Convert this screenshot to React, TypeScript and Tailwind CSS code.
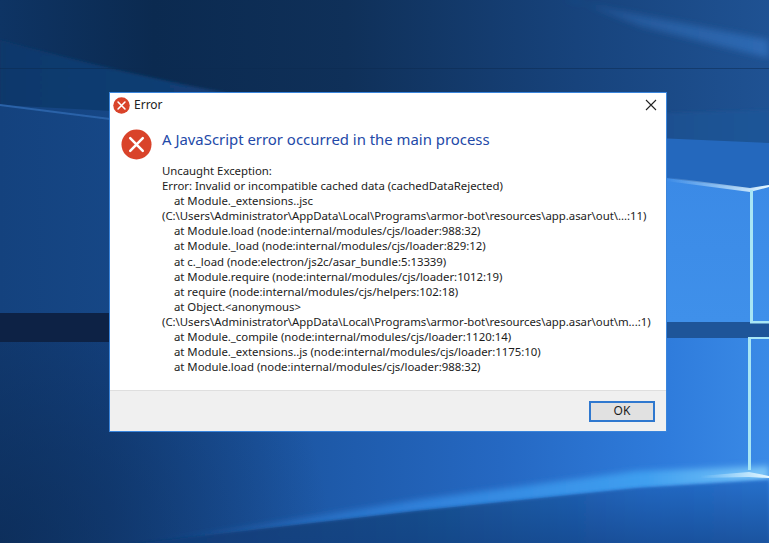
import React from "react";

function Wallpaper() {
  return (
    <svg className="absolute inset-0 w-full h-full" viewBox="0 0 769 543" preserveAspectRatio="none">
      <defs>
        <linearGradient id="base" x1="0" y1="0" x2="1" y2="0">
          <stop offset="0" stopColor="#0e3464" />
          <stop offset="0.2" stopColor="#0b2a50" />
          <stop offset="0.45" stopColor="#0f3059" />
          <stop offset="0.75" stopColor="#17437c" />
          <stop offset="1" stopColor="#1f5293" />
        </linearGradient>
        <linearGradient id="upper" x1="0" y1="0" x2="1" y2="0">
          <stop offset="0" stopColor="#0f386b" />
          <stop offset="0.3" stopColor="#123f76" />
          <stop offset="0.87" stopColor="#1d5090" />
          <stop offset="1" stopColor="#1f5598" />
        </linearGradient>
        <linearGradient id="mid" x1="0" y1="0" x2="1" y2="0">
          <stop offset="0" stopColor="#14427e" />
          <stop offset="0.15" stopColor="#164786" />
          <stop offset="0.6" stopColor="#1d5aa8" />
          <stop offset="0.87" stopColor="#2468bd" />
          <stop offset="1" stopColor="#2468bd" />
        </linearGradient>
        <linearGradient id="low" x1="0" y1="0" x2="1" y2="0">
          <stop offset="0" stopColor="#133e78" />
          <stop offset="0.14" stopColor="#154484" />
          <stop offset="0.4" stopColor="#1d58a6" />
          <stop offset="0.65" stopColor="#2568c2" />
          <stop offset="0.87" stopColor="#2f7cdc" />
          <stop offset="1" stopColor="#3a8ae6" />
        </linearGradient>
        <radialGradient id="corner" gradientUnits="userSpaceOnUse" cx="0" cy="543" r="330">
          <stop offset="0" stopColor="#0a2850" stopOpacity="0.7" />
          <stop offset="1" stopColor="#0a2850" stopOpacity="0" />
        </radialGradient>
        <linearGradient id="floor" x1="0" y1="0" x2="1" y2="0">
          <stop offset="0" stopColor="#0f356a" />
          <stop offset="0.45" stopColor="#17508f" />
          <stop offset="0.8" stopColor="#2268c2" />
          <stop offset="1" stopColor="#2670cc" />
        </linearGradient>
        <linearGradient id="floorShade" x1="0" y1="0" x2="0" y2="1">
          <stop offset="0" stopColor="#123f80" stopOpacity="0" />
          <stop offset="1" stopColor="#123f80" stopOpacity="0.6" />
        </linearGradient>
        <linearGradient id="pane" x1="0" y1="0" x2="0" y2="1">
          <stop offset="0" stopColor="#3b8ae6" />
          <stop offset="1" stopColor="#3f90ea" />
        </linearGradient>
        <linearGradient id="streakTop" x1="0" y1="0" x2="1" y2="0">
          <stop offset="0" stopColor="#2a62a8" stopOpacity="0.25" />
          <stop offset="0.5" stopColor="#2a62a8" stopOpacity="0.85" />
          <stop offset="1" stopColor="#2d6ab4" stopOpacity="1" />
        </linearGradient>
        <linearGradient id="glow" x1="0" y1="0" x2="1" y2="0">
          <stop offset="0" stopColor="#2f7ed8" stopOpacity="0" />
          <stop offset="0.45" stopColor="#3388e2" stopOpacity="0.85" />
          <stop offset="0.8" stopColor="#3f9ff0" stopOpacity="1" />
          <stop offset="1" stopColor="#7cc6f8" stopOpacity="1" />
        </linearGradient>
        <linearGradient id="ray" x1="0" y1="0" x2="1" y2="0">
          <stop offset="0" stopColor="#cfefff" stopOpacity="0" />
          <stop offset="1" stopColor="#e6f8ff" stopOpacity="1" />
        </linearGradient>
        <filter id="soft"><feGaussianBlur stdDeviation="3" /></filter>
        <filter id="soft2"><feGaussianBlur stdDeviation="1.5" /></filter>
        <filter id="soft1"><feGaussianBlur stdDeviation="0.7" /></filter>
      </defs>
      <rect width="769" height="543" fill="url(#base)" />
      <path d="M0 40 C130 75 280 110 430 120 L769 110 V330 L0 330Z" fill="url(#upper)" filter="url(#soft2)" />
      <path d="M563 0 L769 40 V58 L640 26 L575 0Z" fill="url(#streakTop)" filter="url(#soft)" />
      <path d="M0 105 L430 128 L769 143 V330 L0 330Z" fill="url(#mid)" />
      <path d="M0 104 L110 118 V120 L0 106Z" fill="#2a62a8" filter="url(#soft1)" />
      <path d="M666 178 L750 189 L769 185 V322 H666Z" fill="url(#pane)" />
      <rect y="322" width="769" height="221" fill="url(#low)" />
      <rect y="322" width="769" height="221" fill="url(#corner)" />
      <path d="M0 313 H110 V342 H0Z" fill="#0b2145" filter="url(#soft1)" />
      <path d="M666 322 H769 V338 H666Z" fill="#1e5599" />
      <path d="M147 543 L417 500 L637 471 L769 466 V480 L637 490 L417 512 L175 543Z" fill="url(#glow)" filter="url(#soft)" />
      <path d="M125 545 L417 511 L637 488 L769 480 V545Z" fill="url(#floor)" filter="url(#soft2)" />
      <path d="M125 545 L417 511 L637 488 L769 480 V545Z" fill="url(#floorShade)" />
      <path d="M666 177 L750 188 L769 185 V187 L750 192 L666 181Z" fill="url(#ray)" filter="url(#soft1)" />
      <path d="M750 190 H753 V321 H769 V323.5 H750Z" fill="#a8e6f5" filter="url(#soft1)" />
      <path d="M748 337 H769 V339 H751 V470 H748Z" fill="#a8e6f5" filter="url(#soft1)" />
      <path d="M700 476 L749 472 L769 476 V478 L749 477 L700 478Z" fill="url(#ray)" filter="url(#soft1)" />
      <rect y="68" width="769" height="1" fill="#0c2a50" opacity="0.5" />
    </svg>
  );
}

function ErrorIcon({ size, stroke }: { size: number; stroke: number }) {
  return (
    <svg width={size} height={size} viewBox="0 0 32 32" className="shrink-0">
      <circle cx="16" cy="16" r="15.5" fill="#d9432a" />
      <path d="M9.5 9.5L22.5 22.5M22.5 9.5L9.5 22.5" stroke="#fff" strokeWidth={stroke} strokeLinecap="round" />
    </svg>
  );
}

const lines: [string, boolean][] = [
  ["Uncaught Exception:", false],
  ["Error: Invalid or incompatible cached data (cachedDataRejected)", false],
  ["at Module._extensions..jsc", true],
  ["(C:\\Users\\Administrator\\AppData\\Local\\Programs\\armor-bot\\resources\\app.asar\\out\\...:11)", false],
  ["at Module.load (node:internal/modules/cjs/loader:988:32)", true],
  ["at Module._load (node:internal/modules/cjs/loader:829:12)", true],
  ["at c._load (node:electron/js2c/asar_bundle:5:13339)", true],
  ["at Module.require (node:internal/modules/cjs/loader:1012:19)", true],
  ["at require (node:internal/modules/cjs/helpers:102:18)", true],
  ["at Object.<anonymous>", true],
  ["(C:\\Users\\Administrator\\AppData\\Local\\Programs\\armor-bot\\resources\\app.asar\\out\\m...:1)", false],
  ["at Module._compile (node:internal/modules/cjs/loader:1120:14)", true],
  ["at Module._extensions..js (node:internal/modules/cjs/loader:1175:10)", true],
  ["at Module.load (node:internal/modules/cjs/loader:988:32)", true],
];

export default function App() {
  return (
    <div className="relative w-[769px] h-[543px] overflow-hidden font-['Noto_Sans','Open_Sans',sans-serif]">
      <Wallpaper />
      <div className="absolute left-[109px] top-[92px] w-[558px] h-[340px] bg-white border border-[#3a85dc] flex flex-col">
        <div className="h-[24px] flex items-center pl-[3px] pr-[9px] shrink-0">
          <ErrorIcon size={17} stroke={3} />
          <span className="ml-[4px] text-[12px] leading-none text-[#222]">Error</span>
          <svg width="12" height="12" viewBox="0 0 12 12" className="ml-auto">
            <path d="M1 1L11 11M11 1L1 11" stroke="#222" strokeWidth="1.1" />
          </svg>
        </div>
        <div className="flex-1 flex pl-[11px] pt-[12px]">
          <ErrorIcon size={31} stroke={2.6} />
          <div className="ml-[10px] min-w-0">
            <div className="text-[14.9px] leading-[20px] text-[#2349a8] whitespace-nowrap">A JavaScript error occurred in the main process</div>
            <div className="mt-[14px] text-[11.4px] tracking-[-0.03px] leading-[15.1px] text-[#1c1c1c] whitespace-nowrap">
              {lines.map(([t, indent], i) => (
                <div key={i} className={indent ? "pl-[12px]" : ""}>{t}</div>
              ))}
            </div>
          </div>
        </div>
        <div className="h-[41px] shrink-0 bg-[#f0f0f0] border-t border-[#dfdfdf] flex items-center justify-end pr-[11px]">
          <button className="w-[66px] h-[21px] bg-[#e1e1e1] border-2 border-[#2f78cf] text-[12px] leading-none text-[#1c1c1c]">OK</button>
        </div>
      </div>
    </div>
  );
}
